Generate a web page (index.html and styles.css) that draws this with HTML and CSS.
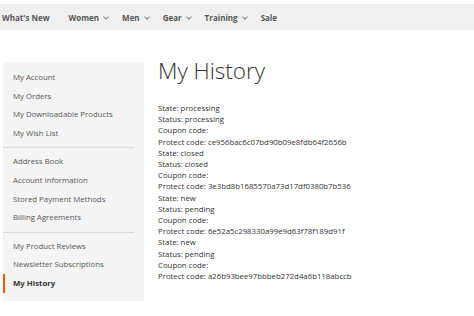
FILE: index.html
```html
<!DOCTYPE html>
<html>
  <head>
    <meta charset="utf-8">
    <title>My History</title>
    <link rel="stylesheet" href="styles.css">
  </head>
  <body>
    <nav class="topnav">
      <a href="#" class="topnav__item">What's New</a>
      <a href="#" class="topnav__item topnav__item--drop">Women</a>
      <a href="#" class="topnav__item topnav__item--drop">Men</a>
      <a href="#" class="topnav__item topnav__item--drop">Gear</a>
      <a href="#" class="topnav__item topnav__item--drop">Training</a>
      <a href="#" class="topnav__item">Sale</a>
    </nav>

    <div class="columns">
      <aside class="sidebar">
        <ul class="sidebar__group">
          <li><a href="#">My Account</a></li>
          <li><a href="#">My Orders</a></li>
          <li><a href="#">My Downloadable Products</a></li>
          <li><a href="#">My Wish List</a></li>
        </ul>
        <ul class="sidebar__group">
          <li><a href="#">Address Book</a></li>
          <li><a href="#">Account Information</a></li>
          <li><a href="#">Stored Payment Methods</a></li>
          <li><a href="#">Billing Agreements</a></li>
        </ul>
        <ul class="sidebar__group">
          <li><a href="#">My Product Reviews</a></li>
          <li><a href="#">Newsletter Subscriptions</a></li>
          <li class="current"><strong>My History</strong></li>
        </ul>
      </aside>

      <main class="content">
        <h1 class="title">My History</h1>
        <div class="history">
          <div>State: processing</div>
          <div>Status: processing</div>
          <div>Coupon code: </div>
          <div>Protect code: ce956bac6c07bd90b09e8fdb64f2656b</div>
          <div>State: closed</div>
          <div>Status: closed</div>
          <div>Coupon code: </div>
          <div>Protect code: 3e3bd8b1685570a73d17df0380b7b536</div>
          <div>State: new</div>
          <div>Status: pending</div>
          <div>Coupon code: </div>
          <div>Protect code: 6e52a5c298330a99e9d63f78f189d91f</div>
          <div>State: new</div>
          <div>Status: pending</div>
          <div>Coupon code: </div>
          <div>Protect code: a26b93bee97bbbeb272d4a6b118abccb</div>
        </div>
      </main>
    </div>
  </body>
</html>
```
FILE: styles.css
```css
body {
  margin: 0;
  font-family: 'Open Sans', 'Liberation Sans', sans-serif;
  color: #333;
  background: #fff;
}
a {
  color: inherit;
  text-decoration: none;
}
.topnav {
  display: flex;
  align-items: center;
  height: 26px;
  margin-top: 4px;
  padding-left: 2px;
  background: #f0f0f0;
}
.topnav__item {
  margin-right: 14px;
  font-size: 8px;
  font-weight: 700;
  color: #575757;
}
.topnav__item:first-child {
  margin-right: 19px;
}
.topnav__item--drop::after {
  content: '';
  display: inline-block;
  width: 3px;
  height: 3px;
  margin-left: 5px;
  border-right: 1px solid #8a8a8a;
  border-bottom: 1px solid #8a8a8a;
  transform: translateY(-2px) rotate(45deg);
}
.columns {
  display: flex;
  align-items: flex-start;
  margin-top: 32px;
  padding-left: 3px;
}
.sidebar {
  width: 141px;
  padding: 6px 0 8px;
  background: #f5f5f5;
  font-size: 7.8px;
  color: #575757;
}
.sidebar__group {
  margin: 0 10px 0 0;
  padding: 0;
  list-style: none;
}
.sidebar__group + .sidebar__group {
  margin-top: 5px;
  padding-top: 4px;
  border-top: 1px solid #dcdcdc;
}
.sidebar__group li {
  padding: 4px 0 4px 10px;
  line-height: 10.6px;
}
.sidebar .current {
  border-left: 2px solid #ff5501;
  padding-left: 8px;
  color: #333;
}
.content {
  margin-left: 14px;
}
.title {
  margin: -9px 0 0;
  font-size: 22.5px;
  font-weight: 300;
  line-height: 36px;
}
.history {
  margin-top: 14px;
  font-size: 7.8px;
  line-height: 11.2px;
}
```
